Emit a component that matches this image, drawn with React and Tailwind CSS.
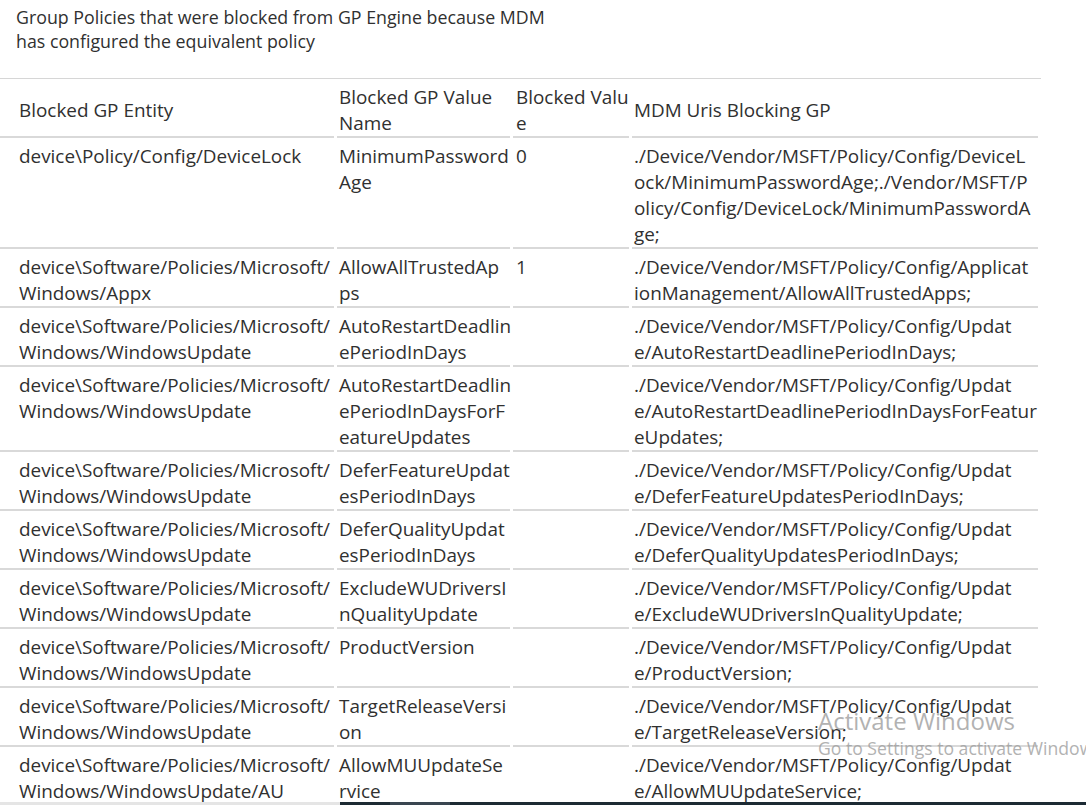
import React from "react";

const rows = [
  [["device\\Policy/Config/DeviceLock"], ["MinimumPassword", "Age"], ["0"], ["./Device/Vendor/MSFT/Policy/Config/DeviceL", "ock/MinimumPasswordAge;./Vendor/MSFT/P", "olicy/Config/DeviceLock/MinimumPasswordA", "ge;"]],
  [["device\\Software/Policies/Microsoft/", "Windows/Appx"], ["AllowAllTrustedAp", "ps"], ["1"], ["./Device/Vendor/MSFT/Policy/Config/Applicat", "ionManagement/AllowAllTrustedApps;"]],
  [["device\\Software/Policies/Microsoft/", "Windows/WindowsUpdate"], ["AutoRestartDeadlin", "ePeriodInDays"], [], ["./Device/Vendor/MSFT/Policy/Config/Updat", "e/AutoRestartDeadlinePeriodInDays;"]],
  [["device\\Software/Policies/Microsoft/", "Windows/WindowsUpdate"], ["AutoRestartDeadlin", "ePeriodInDaysForF", "eatureUpdates"], [], ["./Device/Vendor/MSFT/Policy/Config/Updat", "e/AutoRestartDeadlinePeriodInDaysForFeatur", "eUpdates;"]],
  [["device\\Software/Policies/Microsoft/", "Windows/WindowsUpdate"], ["DeferFeatureUpdat", "esPeriodInDays"], [], ["./Device/Vendor/MSFT/Policy/Config/Updat", "e/DeferFeatureUpdatesPeriodInDays;"]],
  [["device\\Software/Policies/Microsoft/", "Windows/WindowsUpdate"], ["DeferQualityUpdat", "esPeriodInDays"], [], ["./Device/Vendor/MSFT/Policy/Config/Updat", "e/DeferQualityUpdatesPeriodInDays;"]],
  [["device\\Software/Policies/Microsoft/", "Windows/WindowsUpdate"], ["ExcludeWUDriversI", "nQualityUpdate"], [], ["./Device/Vendor/MSFT/Policy/Config/Updat", "e/ExcludeWUDriversInQualityUpdate;"]],
  [["device\\Software/Policies/Microsoft/", "Windows/WindowsUpdate"], ["ProductVersion"], [], ["./Device/Vendor/MSFT/Policy/Config/Updat", "e/ProductVersion;"]],
  [["device\\Software/Policies/Microsoft/", "Windows/WindowsUpdate"], ["TargetReleaseVersi", "on"], [], ["./Device/Vendor/MSFT/Policy/Config/Updat", "e/TargetReleaseVersion;"]],
  [["device\\Software/Policies/Microsoft/", "Windows/WindowsUpdate/AU"], ["AllowMUUpdateSe", "rvice"], [], ["./Device/Vendor/MSFT/Policy/Config/Updat", "e/AllowMUUpdateService;"]],
];

const pads = ["pl-[19px]", "pl-[2px]", "pl-[3px]", "pl-[2px]"];

function Lines({ lines }) {
  return lines.map((l, i) => (
    <div key={i} className="whitespace-nowrap">{l}</div>
  ));
}

export default function App() {
  return (
    <div className="relative h-[805px] w-[1086px] overflow-hidden bg-white text-[#303030]" style={{ fontFamily: '"Open Sans", "Noto Sans", sans-serif' }}>
      <div className="pl-4 pt-[5px] text-[17.8px] leading-[24px]">
        <div className="whitespace-nowrap">Group Policies that were blocked from GP Engine because MDM</div>
        <div className="whitespace-nowrap">has configured the equivalent policy</div>
      </div>
      <div className="mt-[25px] w-[1041px] border-t border-[#d6d6d6] pt-[5px] text-[18.9px] leading-[26px]">
        <div className="grid grid-cols-[334px_173px_116px_406px] gap-x-[3px]">
          <div className={`flex items-center whitespace-nowrap border-b-2 border-[#d9d9d9] ${pads[0]}`}>Blocked GP Entity</div>
          <div className={`border-b-2 border-[#d9d9d9] ${pads[1]}`}><Lines lines={["Blocked GP Value", "Name"]} /></div>
          <div className={`border-b-2 border-[#d9d9d9] ${pads[2]}`}><Lines lines={["Blocked Valu", "e"]} /></div>
          <div className={`flex items-center whitespace-nowrap border-b-2 border-[#d9d9d9] ${pads[3]}`}>MDM Uris Blocking GP</div>
        </div>
        {rows.map((r, ri) => (
          <div key={ri} className="mt-[2px] grid grid-cols-[334px_173px_116px_406px] gap-x-[3px]">
            {r.map((c, ci) => (
              <div key={ci} className={`border-b-2 border-[#d9d9d9] pt-[3px] ${pads[ci]}`}>
                <Lines lines={c} />
              </div>
            ))}
          </div>
        ))}
      </div>
      <div className="pointer-events-none absolute left-[818px] top-[705px] whitespace-nowrap text-[#999999] opacity-75" style={{ fontFamily: '"Open Sans", "Noto Sans", sans-serif' }}>
        <div className="text-[24px] leading-[32px]">Activate Windows</div>
        <div className="text-[17.6px] leading-[22px]">Go to Settings to activate Windows.</div>
      </div>
      <div className="absolute bottom-0 left-0 flex h-[3px] w-full">
        <div className="w-[340px] bg-[#e5e5e5]"></div>
        <div className="w-[50px] bg-[#1c2a33]"></div>
        <div className="w-[60px] bg-[#3a4650]"></div>
        <div className="flex-1 bg-[#1c2a33]"></div>
      </div>
    </div>
  );
}
